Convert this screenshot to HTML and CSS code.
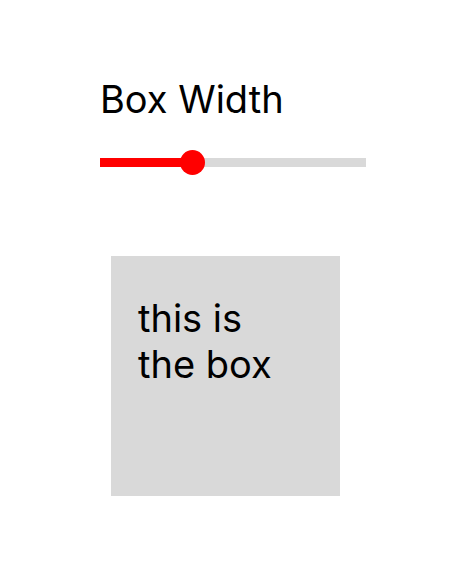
FILE: index.html
```html
<!DOCTYPE html>
<html lang="en">
<head>
<meta charset="utf-8">
<title>Box Width</title>
<link rel="stylesheet" href="styles.css">
</head>
<body>
  <main class="page">
    <section class="control">
      <label class="control-label" for="width-slider">Box Width</label>
      <div class="slider" id="width-slider" role="slider" aria-valuemin="0" aria-valuemax="100" aria-valuenow="35">
        <div class="slider-fill" style="width: 35%">
          <span class="slider-thumb"></span>
        </div>
      </div>
    </section>
    <div class="box">
      <p class="box-text">this is<br>the box</p>
    </div>
  </main>
</body>
</html>
```
FILE: styles.css
```css
html, body {
  margin: 0;
  padding: 0;
  background: #ffffff;
}

body {
  font-family: Inter, "Noto Sans", sans-serif;
  color: #000000;
}

.page {
  display: flex;
  flex-direction: column;
  padding: 77px 0 0 100px;
}

.control {
  display: flex;
  flex-direction: column;
  gap: 37px;
}

.control-label {
  font-size: 38px;
  line-height: 44px;
  font-weight: 400;
  display: block;
}

.slider {
  position: relative;
  width: 266px;
  height: 9px;
  background: #d9d9d9;
}

.slider-fill {
  position: relative;
  height: 100%;
  background: #ff0000;
}

.slider-thumb {
  position: absolute;
  right: -12px;
  top: 50%;
  width: 25px;
  height: 25px;
  margin-top: -12.5px;
  border-radius: 50%;
  background: #ff0000;
}

.box {
  margin: 89px 0 0 11px;
  width: 229px;
  height: 240px;
  box-sizing: border-box;
  padding: 39px 0 0 27px;
  background: #d9d9d9;
}

.box-text {
  margin: 0;
  font-size: 38px;
  line-height: 46px;
}
```
